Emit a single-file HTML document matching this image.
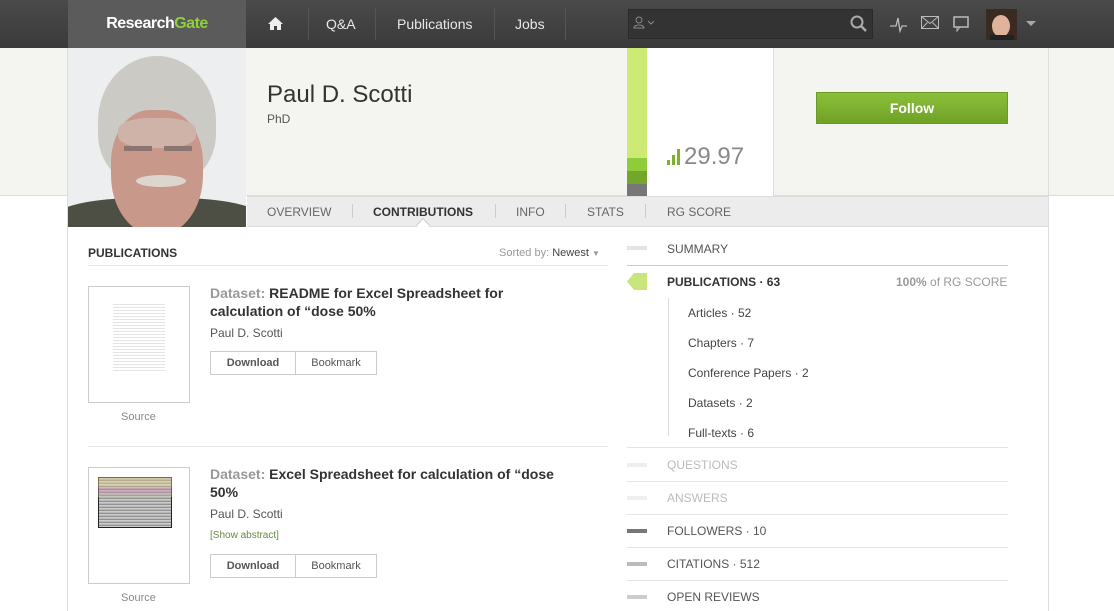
<!DOCTYPE html>
<html><head><meta charset="utf-8"><style>
*{margin:0;padding:0;box-sizing:border-box}
body{width:1114px;height:611px;overflow:hidden;background:#fff;font-family:"Liberation Sans",Arial,sans-serif;color:#333;position:relative}
.a{position:absolute}
.top{left:0;top:0;width:1114px;height:48px;background:linear-gradient(#4a4a4a,#3a3a3a)}
.logo{left:68px;top:0;width:178px;height:48px;background:#5b5b5b;color:#fff;font-weight:bold;font-size:16px;text-align:center;line-height:48px;letter-spacing:-0.5px}
.nav{top:0;height:48px;line-height:48px;color:#e8e8e8;font-size:14px}
.sep{top:8px;width:1px;height:32px;background:#2e2e2e;border-right:1px solid #555}
.hdr{left:0;top:48px;width:1114px;height:148px;background:#f4f4f0;border-bottom:1px solid #ddd}
.side{top:48px;width:1px;height:563px;background:#ddd}
.tab{top:205px;font-size:12px;color:#666}
.ts{top:204px;width:1px;height:14px;background:#ccc}
.btn{height:24px;border:1px solid #ccc;font-size:11px;line-height:22px;text-align:center;color:#555}
.rl{left:667px;font-size:12px;color:#555}
.rline{left:627px;width:381px;height:1px;background:#e4e4e4}
.dash{left:627px;width:20px;height:4px;background:#e4e4e4}
.sub{left:688px;font-size:12px;color:#444}
</style></head><body>
<div class="a top"></div>
<div class="a logo">Research<span style="color:#8fd13a">Gate</span></div>
<svg class="a" style="left:267px;top:16px" width="17" height="15" viewBox="0 0 17 15"><path d="M8.5 1L1 8h2v6h4v-4h3v4h4V8h2z" fill="#eee"/></svg>
<div class="a sep" style="left:308px"></div>
<div class="a nav" style="left:326px">Q&amp;A</div>
<div class="a sep" style="left:375px"></div>
<div class="a nav" style="left:397px">Publications</div>
<div class="a sep" style="left:494px"></div>
<div class="a nav" style="left:515px">Jobs</div>
<div class="a sep" style="left:565px"></div>
<div class="a" style="left:628px;top:9px;width:245px;height:30px;background:#333;border:1px solid #2a2a2a"></div>
<svg class="a" style="left:633px;top:16px" width="24" height="14"><circle cx="6" cy="4" r="3" fill="none" stroke="#888"/><path d="M1 12c0-4 10-4 10 0z" fill="none" stroke="#888"/><path d="M15 5l3 3 3-3" fill="none" stroke="#888"/></svg>
<svg class="a" style="left:850px;top:15px" width="18" height="18" viewBox="0 0 18 18"><circle cx="7" cy="7" r="5.5" stroke="#aaa" stroke-width="2" fill="none"/><path d="M11 11l5 5" stroke="#aaa" stroke-width="2.5"/></svg>
<svg class="a" style="left:889px;top:14px" width="20" height="20" viewBox="0 0 20 20"><path d="M1 12h6l2-8 2 13 2-5h5" stroke="#bbb" stroke-width="1.3" fill="none"/></svg>
<svg class="a" style="left:921px;top:16px" width="18" height="14"><rect x=".5" y=".5" width="17" height="12" fill="none" stroke="#bbb"/><path d="M.5 .5l8.5 7 8.5-7M.5 12.5l6-6M17.5 12.5l-6-6" stroke="#bbb" fill="none"/></svg>
<svg class="a" style="left:953px;top:16px" width="16" height="17"><rect x="1" y="1" width="14" height="10" fill="none" stroke="#bbb" stroke-width="1.5"/><path d="M4 11v4l3-4" stroke="#bbb" fill="none"/></svg>
<div class="a" style="left:986px;top:9px;width:31px;height:31px;background:#3a2a22;overflow:hidden"><div class="a" style="left:6px;top:6px;width:18px;height:22px;border-radius:50%;background:#e0b49c"></div><div class="a" style="left:4px;top:26px;width:24px;height:8px;background:#222"></div></div>
<div class="a" style="left:1026px;top:21px;border:5px solid transparent;border-top:5px solid #aaa"></div>

<div class="a hdr"></div>
<div class="a" style="left:0;top:196px;width:1114px;height:415px;background:#fff"></div>
<div class="a side" style="left:67px"></div>
<div class="a side" style="left:1048px"></div>
<div class="a" style="left:68px;top:48px;width:178px;height:179px;background:#eceeef;overflow:hidden">
 <div class="a" style="left:-20px;top:150px;width:220px;height:60px;border-radius:40%;background:#4e4f44"></div>
 <div class="a" style="left:30px;top:8px;width:118px;height:130px;border-radius:50% 50% 40% 40%;background:#cbcac5"></div>
 <div class="a" style="left:43px;top:62px;width:92px;height:125px;border-radius:42% 42% 48% 48%;background:#c8988a"></div>
 <div class="a" style="left:50px;top:70px;width:78px;height:30px;border-radius:40%;background:#cfb2a8"></div>
 <div class="a" style="left:56px;top:98px;width:28px;height:5px;background:#8a7570"></div>
 <div class="a" style="left:96px;top:98px;width:28px;height:5px;background:#8a7570"></div>
 <div class="a" style="left:68px;top:127px;width:50px;height:12px;border-radius:50%;background:#ddd6cf"></div>
</div>

<div class="a" style="left:267px;top:81px;font-size:24px;color:#333">Paul D. Scotti</div>
<div class="a" style="left:267px;top:112px;font-size:12px;color:#555">PhD</div>
<div class="a" style="left:627px;top:48px;width:20px;height:110px;background:#cdea74"></div>
<div class="a" style="left:627px;top:158px;width:20px;height:13px;background:#8fcc3a"></div>
<div class="a" style="left:627px;top:171px;width:20px;height:13px;background:#74a62c"></div>
<div class="a" style="left:627px;top:184px;width:20px;height:12px;background:#777"></div>
<div class="a" style="left:647px;top:48px;width:127px;height:148px;background:#fff;border-right:1px solid #ddd"></div>
<div class="a" style="left:667px;top:160px;width:3px;height:5px;background:#7fb030"></div>
<div class="a" style="left:672px;top:155px;width:3px;height:10px;background:#7fb030"></div>
<div class="a" style="left:677px;top:149px;width:3px;height:16px;background:#7fb030"></div>
<div class="a" style="left:684px;top:143px;font-size:24px;color:#888">29.97</div>
<div class="a" style="left:816px;top:92px;width:192px;height:32px;background:linear-gradient(#8bbf3a,#6fa225);border:1px solid #6a9a25;color:#fff;font-weight:bold;font-size:14px;text-align:center;line-height:30px">Follow</div>

<div class="a" style="left:247px;top:196px;width:801px;height:31px;background:#ececec;border-top:1px solid #ddd;border-bottom:1px solid #ddd"></div>
<div class="a tab" style="left:267px">OVERVIEW</div>
<div class="a ts" style="left:352px"></div>
<div class="a tab" style="left:373px;font-weight:bold;color:#333">CONTRIBUTIONS</div>
<div class="a ts" style="left:495px"></div>
<div class="a tab" style="left:516px">INFO</div>
<div class="a ts" style="left:565px"></div>
<div class="a tab" style="left:587px">STATS</div>
<div class="a ts" style="left:645px"></div>
<div class="a tab" style="left:667px">RG SCORE</div>
<div class="a" style="left:418px;top:220px;width:10px;height:10px;background:#fff;border-left:1px solid #ccc;border-top:1px solid #ccc;transform:rotate(45deg)"></div>

<div class="a" style="left:88px;top:246px;font-size:12px;font-weight:bold;color:#333">PUBLICATIONS</div>
<div class="a" style="left:499px;top:247px;font-size:11px;color:#999">Sorted by: <span style="color:#444">Newest</span> <span style="font-size:8px">&#9660;</span></div>
<div class="a" style="left:88px;top:265px;width:520px;height:1px;background:#e4e4e4"></div>
<div class="a" style="left:88px;top:286px;width:102px;height:117px;border:1px solid #ccc;background:#fff"></div>
<div class="a" style="left:113px;top:302px;width:52px;height:70px;background:repeating-linear-gradient(#fff 0,#fff 2px,#ddd 2px,#ddd 3px);opacity:.8"></div>
<div class="a" style="left:121px;top:411px;font-size:11px;color:#888">Source</div>
<div class="a" style="left:210px;top:284px;width:330px;font-size:14px;font-weight:bold;line-height:18px;color:#333"><span style="color:#999">Dataset:</span> README for Excel Spreadsheet for calculation of “dose 50%</div>
<div class="a" style="left:210px;top:326px;font-size:12px;color:#555">Paul D. Scotti</div>
<div class="a btn" style="left:210px;top:351px;width:86px;font-weight:bold">Download</div>
<div class="a btn" style="left:295px;top:351px;width:82px">Bookmark</div>
<div class="a" style="left:88px;top:446px;width:520px;height:1px;background:#e4e4e4"></div>
<div class="a" style="left:88px;top:467px;width:102px;height:117px;border:1px solid #ccc;background:#fff"></div>
<div class="a" style="left:98px;top:477px;width:74px;height:51px;border:1px solid #222;background:repeating-linear-gradient(#bbb 0,#eee 1.5px,#222 2px,#fff 3px)"></div>
<div class="a" style="left:98px;top:477px;width:74px;height:20px;background:linear-gradient(#d8c080,#e8e090 40%,#d080b0 60%,#c0c0a0);opacity:.45"></div>
<div class="a" style="left:121px;top:592px;font-size:11px;color:#888">Source</div>
<div class="a" style="left:210px;top:465px;width:370px;font-size:14px;font-weight:bold;line-height:18px;color:#333"><span style="color:#999">Dataset:</span> Excel Spreadsheet for calculation of “dose 50%</div>
<div class="a" style="left:210px;top:507px;font-size:12px;color:#555">Paul D. Scotti</div>
<div class="a" style="left:210px;top:530px;font-size:10px;color:#6a8a40">[Show abstract]</div>
<div class="a btn" style="left:210px;top:554px;width:86px;font-weight:bold">Download</div>
<div class="a btn" style="left:295px;top:554px;width:82px">Bookmark</div>

<div class="a dash" style="top:246px"></div>
<div class="a rl" style="top:242px">SUMMARY</div>
<div class="a rline" style="top:265px;background:#ccc"></div>
<svg class="a" style="left:627px;top:273px" width="20" height="17"><path d="M7 0h13v17H7L0 8.5z" fill="#c8e67a"/></svg>
<div class="a rl" style="top:275px;font-weight:bold;color:#333">PUBLICATIONS · 63</div>
<div class="a" style="left:896px;top:275px;font-size:12px;color:#999"><b>100%</b> of RG SCORE</div>
<div class="a" style="left:668px;top:298px;width:1px;height:138px;background:#ddd"></div>
<div class="a sub" style="top:306px">Articles · 52</div>
<div class="a sub" style="top:336px">Chapters · 7</div>
<div class="a sub" style="top:366px">Conference Papers · 2</div>
<div class="a sub" style="top:396px">Datasets · 2</div>
<div class="a sub" style="top:426px">Full-texts · 6</div>
<div class="a rline" style="top:447px"></div>
<div class="a dash" style="top:463px;background:#eee"></div>
<div class="a rl" style="top:458px;color:#bbb">QUESTIONS</div>
<div class="a rline" style="top:481px"></div>
<div class="a dash" style="top:496px;background:#eee"></div>
<div class="a rl" style="top:491px;color:#bbb">ANSWERS</div>
<div class="a rline" style="top:514px"></div>
<div class="a dash" style="top:529px;background:#777"></div>
<div class="a rl" style="top:524px">FOLLOWERS · 10</div>
<div class="a rline" style="top:547px"></div>
<div class="a dash" style="top:562px;background:#bbb"></div>
<div class="a rl" style="top:557px">CITATIONS · 512</div>
<div class="a rline" style="top:580px"></div>
<div class="a dash" style="top:595px;background:#ccc"></div>
<div class="a rl" style="top:590px">OPEN REVIEWS</div>
</body></html>
